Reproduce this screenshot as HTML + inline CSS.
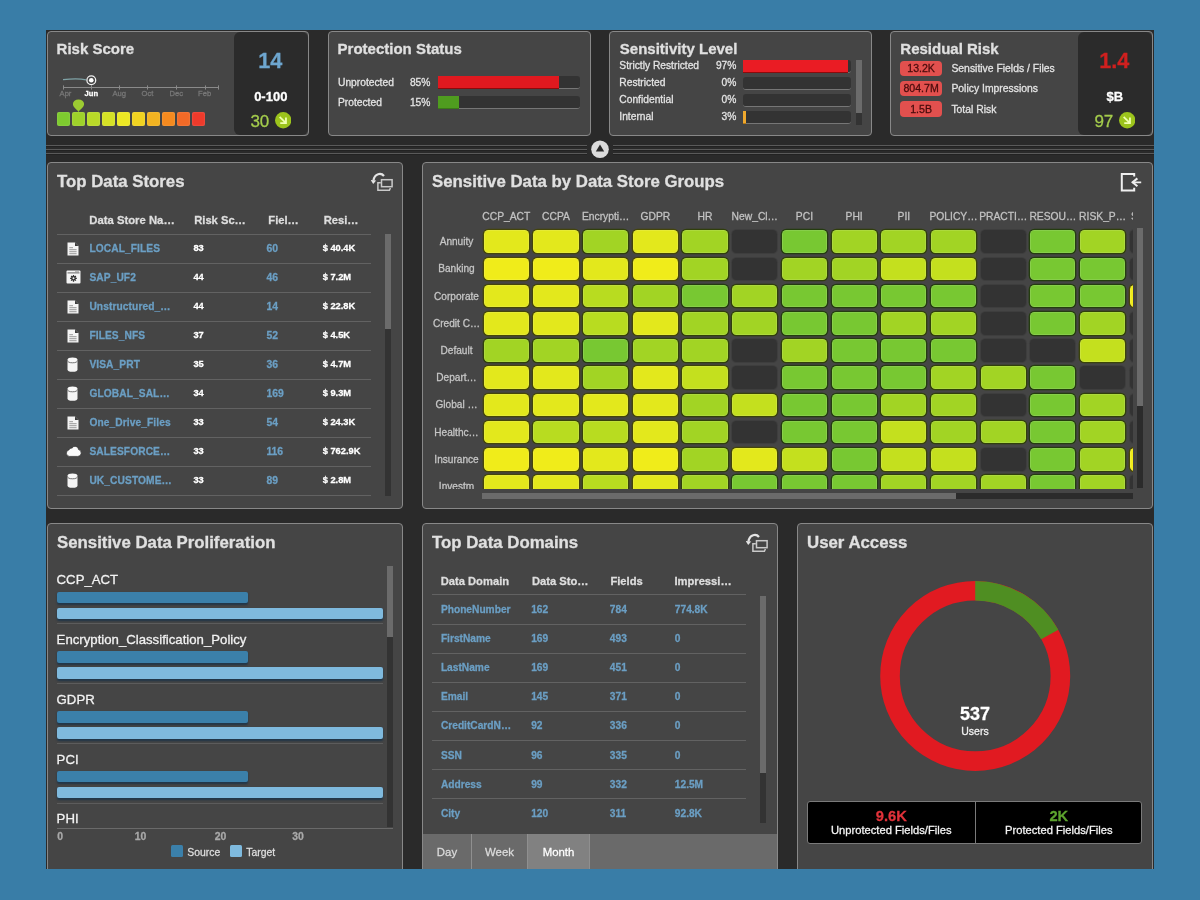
<!DOCTYPE html><html><head><meta charset="utf-8"><title>Dashboard</title><style>
*{box-sizing:border-box;margin:0;padding:0}
html,body{width:1200px;height:900px;overflow:hidden}
body{background:#397da7;font-family:"Liberation Sans",sans-serif;position:relative;color:#e2e2e2}
.abs{position:absolute}
#panel{will-change:transform;position:absolute;left:46px;top:30px;width:1108px;height:839px;background:#2a2a2a;overflow:hidden}
.card{position:absolute;background:#454545;border:1px solid #888;border-radius:4px;overflow:hidden}
.title{position:absolute;font-weight:bold;font-size:15px;color:#e0e0e0;white-space:nowrap;line-height:18px}
.t{position:absolute;white-space:nowrap;line-height:1;-webkit-text-stroke:0.28px}
.sm{font-size:10.4px;color:#e4e4e4}
.dark{position:absolute;background:#2b2b2b;border-radius:6px}
.hl{position:absolute;height:1px;background:#5a5a5a;box-shadow:0 1px 0 #222}
</style></head><body><div id="panel"><div class="hl" style="left:0;top:115px;width:541px"></div><div class="hl" style="left:567px;top:115px;width:541px"></div><div class="hl" style="left:0;top:119px;width:541px"></div><div class="hl" style="left:567px;top:119px;width:541px"></div><div class="hl" style="left:0;top:123px;width:541px"></div><div class="hl" style="left:567px;top:123px;width:541px"></div><svg class="abs" style="left:544px;top:109px" width="20" height="20" viewBox="0 0 20 20"><circle cx="10" cy="10.2" r="8.8" fill="#dcdcdc"/><path d="M10 5.4 L14.2 12.6 L5.8 12.6 Z" fill="#2a2a2a"/></svg><div class="card " style="left:1px;top:1px;width:262px;height:105px"><div class="t" style="left:8.60px;top:8px;font-size:15px;line-height:18px;font-weight:bold;color:#e0e0e0">Risk Score</div><svg class="abs" style="left:7px;top:38px" width="175" height="30" viewBox="55 70 175 30"><path d="M63.5 87.5 H218.5" stroke="#8a8a8a" stroke-width="1" fill="none"/><path d="M63.5 85.4 V89.6" stroke="#8a8a8a" stroke-width="1"/><path d="M91.5 85.4 V89.6" stroke="#8a8a8a" stroke-width="1"/><path d="M119.5 85.4 V89.6" stroke="#8a8a8a" stroke-width="1"/><path d="M147.5 85.4 V89.6" stroke="#8a8a8a" stroke-width="1"/><path d="M176.5 85.4 V89.6" stroke="#8a8a8a" stroke-width="1"/><path d="M205.5 85.4 V89.6" stroke="#8a8a8a" stroke-width="1"/><path d="M218.5 85.4 V89.6" stroke="#8a8a8a" stroke-width="1"/><path d="M63 79.6 C72 78.6 80 78.4 86 79.8" stroke="#7fa2a6" stroke-width="1.3" fill="none"/><circle cx="91.3" cy="80.3" r="4.4" fill="#454545" stroke="#f2f2f2" stroke-width="1.3"/><circle cx="91.3" cy="80.3" r="2.3" fill="#fff"/></svg><div class="t" style="left:2.50px;top:57px;font-size:7.6px;line-height:10px;width:30px;text-align:center;color:#787878">Apr</div><div class="t" style="left:28.30px;top:57px;font-size:7.6px;line-height:10px;width:30px;text-align:center;color:#fff;font-weight:bold">Jun</div><div class="t" style="left:56.20px;top:57px;font-size:7.6px;line-height:10px;width:30px;text-align:center;color:#787878">Aug</div><div class="t" style="left:84.50px;top:57px;font-size:7.6px;line-height:10px;width:30px;text-align:center;color:#787878">Oct</div><div class="t" style="left:113.20px;top:57px;font-size:7.6px;line-height:10px;width:30px;text-align:center;color:#787878">Dec</div><div class="t" style="left:141.60px;top:57px;font-size:7.6px;line-height:10px;width:30px;text-align:center;color:#787878">Feb</div><div class="abs" style="left:9.30px;top:80.40px;width:12.9px;height:13.2px;border-radius:2px;background:#7ecb2f;box-shadow:inset 0 0 2px rgba(255,255,255,.25)"></div><div class="abs" style="left:24.30px;top:80.40px;width:12.9px;height:13.2px;border-radius:2px;background:#9ed12a;box-shadow:inset 0 0 2px rgba(255,255,255,.25)"></div><div class="abs" style="left:39.30px;top:80.40px;width:12.9px;height:13.2px;border-radius:2px;background:#b9d928;box-shadow:inset 0 0 2px rgba(255,255,255,.25)"></div><div class="abs" style="left:54.30px;top:80.40px;width:12.9px;height:13.2px;border-radius:2px;background:#d5e126;box-shadow:inset 0 0 2px rgba(255,255,255,.25)"></div><div class="abs" style="left:69.30px;top:80.40px;width:12.9px;height:13.2px;border-radius:2px;background:#ece824;box-shadow:inset 0 0 2px rgba(255,255,255,.25)"></div><div class="abs" style="left:84.30px;top:80.40px;width:12.9px;height:13.2px;border-radius:2px;background:#f0d321;box-shadow:inset 0 0 2px rgba(255,255,255,.25)"></div><div class="abs" style="left:99.30px;top:80.40px;width:12.9px;height:13.2px;border-radius:2px;background:#f2b321;box-shadow:inset 0 0 2px rgba(255,255,255,.25)"></div><div class="abs" style="left:114.30px;top:80.40px;width:12.9px;height:13.2px;border-radius:2px;background:#f58a1f;box-shadow:inset 0 0 2px rgba(255,255,255,.25)"></div><div class="abs" style="left:129.30px;top:80.40px;width:12.9px;height:13.2px;border-radius:2px;background:#f26a27;box-shadow:inset 0 0 2px rgba(255,255,255,.25)"></div><div class="abs" style="left:144.30px;top:80.40px;width:12.9px;height:13.2px;border-radius:2px;background:#ee3a2b;box-shadow:inset 0 0 2px rgba(255,255,255,.25)"></div><svg class="abs" style="left:24px;top:67px" width="13" height="14" viewBox="0 0 13 14"><path d="M6.5 13.2 C5.6 10.6 0.9 8.6 0.9 5 A5.6 4.6 0 0 1 12.1 5 C12.1 8.6 7.4 10.6 6.5 13.2 Z" fill="#9ccb32"/></svg><div class="dark" style="left:186px;top:0px;width:74px;height:103px"></div><div class="t" style="left:185.60px;top:17px;font-size:21.6px;line-height:24px;width:73.5px;text-align:center;font-weight:bold;color:#6ea6cf">14</div><div class="t" style="left:186.00px;top:57px;font-size:13px;line-height:16px;width:73.5px;text-align:center;font-weight:bold;color:#fff">0-100</div><div class="t" style="left:202.40px;top:80px;font-size:17px;line-height:20px;color:#a4cc4c">30</div><svg class="abs" style="left:226.8px;top:80.4px" width="16.4" height="16.4" viewBox="0 0 16 16"><circle cx="8" cy="8" r="8" fill="#9cc41c"/><path d="M5.2 5.4 L10 10.2 M6 10.9 L10.7 10.9 L10.7 6.2" stroke="#f0ffb0" stroke-width="1.8" fill="none" stroke-linecap="square"/></svg></div><div class="card " style="left:282px;top:1px;width:263px;height:105px"><div class="t" style="left:8.60px;top:8px;font-size:15px;line-height:18px;font-weight:bold;color:#e0e0e0">Protection Status</div><div class="t" style="left:9.00px;top:44px;font-size:10.25px;line-height:13px;color:#e4e4e4">Unprotected</div><div class="t" style="left:71.00px;top:44px;font-size:10.25px;line-height:13px;width:30.4px;text-align:right;color:#e4e4e4">85%</div><div class="abs" style="left:109px;top:44.3px;width:142px;height:13.0px;background:#333;border-bottom:1px solid #767676;border-radius:0 3px 3px 0"></div><div class="abs" style="left:109px;top:44.3px;width:120.7px;height:13.0px;background:#e0191f;border-bottom:1.5px solid #8c0a0c"></div><div class="t" style="left:9.00px;top:64px;font-size:10.25px;line-height:13px;color:#e4e4e4">Protected</div><div class="t" style="left:71.00px;top:64px;font-size:10.25px;line-height:13px;width:30.4px;text-align:right;color:#e4e4e4">15%</div><div class="abs" style="left:109px;top:64.1px;width:142px;height:13.0px;background:#333;border-bottom:1px solid #767676;border-radius:0 3px 3px 0"></div><div class="abs" style="left:109px;top:64.1px;width:21.3px;height:13.0px;background:#4f9c1f;border-bottom:1.5px solid #3b7a18"></div></div><div class="card " style="left:563px;top:1px;width:263px;height:105px"><div class="t" style="left:9.80px;top:8px;font-size:15px;line-height:18px;font-weight:bold;color:#e0e0e0">Sensitivity Level</div><div class="t" style="left:9.30px;top:27px;font-size:10.25px;line-height:13px;color:#e4e4e4">Strictly Restricted</div><div class="t" style="left:96.00px;top:27px;font-size:10.25px;line-height:13px;width:30.4px;text-align:right;color:#e4e4e4">97%</div><div class="abs" style="left:133px;top:28.0px;width:108px;height:13.0px;background:#333;border-bottom:1px solid #767676;border-radius:0 3px 3px 0"></div><div class="abs" style="left:133px;top:28.0px;width:104.8px;height:13.0px;background:#ea1c24;border-bottom:1.5px solid #8c0a0c"></div><div class="t" style="left:9.30px;top:44px;font-size:10.25px;line-height:13px;color:#e4e4e4">Restricted</div><div class="t" style="left:96.00px;top:44px;font-size:10.25px;line-height:13px;width:30.4px;text-align:right;color:#e4e4e4">0%</div><div class="abs" style="left:133px;top:44.900000000000006px;width:108px;height:13.0px;background:#333;border-bottom:1px solid #767676;border-radius:3px"></div><div class="t" style="left:9.30px;top:61px;font-size:10.25px;line-height:13px;color:#e4e4e4">Confidential</div><div class="t" style="left:96.00px;top:61px;font-size:10.25px;line-height:13px;width:30.4px;text-align:right;color:#e4e4e4">0%</div><div class="abs" style="left:133px;top:61.8px;width:108px;height:13.0px;background:#333;border-bottom:1px solid #767676;border-radius:3px"></div><div class="t" style="left:9.30px;top:78px;font-size:10.25px;line-height:13px;color:#e4e4e4">Internal</div><div class="t" style="left:96.00px;top:78px;font-size:10.25px;line-height:13px;width:30.4px;text-align:right;color:#e4e4e4">3%</div><div class="abs" style="left:133px;top:78.69999999999999px;width:108px;height:13.0px;background:#333;border-bottom:1px solid #767676;border-radius:0 3px 3px 0"></div><div class="abs" style="left:133px;top:78.69999999999999px;width:3.2px;height:13.0px;background:#f0a92e;border-bottom:1.5px solid #b87a10"></div><div class="abs" style="left:246px;top:28px;width:6px;height:65px;background:#333"></div><div class="abs" style="left:246px;top:28px;width:6px;height:52.5px;background:#6b6b6b"></div></div><div class="card " style="left:844px;top:1px;width:263px;height:105px"><div class="t" style="left:9.30px;top:8px;font-size:15px;line-height:18px;font-weight:bold;color:#e0e0e0">Residual Risk</div><div class="abs" style="left:9.100000000000023px;top:28.5px;width:42px;height:15.5px;border-radius:4px;background:#e2504e"></div><div class="t" style="left:9.10px;top:29px;font-size:10.6px;line-height:14px;width:42px;text-align:center;color:#4a0c0c">13.2K</div><div class="t" style="left:60.40px;top:30px;font-size:10.4px;line-height:14px;color:#e4e4e4">Sensitive Fields / Files</div><div class="abs" style="left:9.100000000000023px;top:48.900000000000006px;width:42px;height:15.5px;border-radius:4px;background:#e2504e"></div><div class="t" style="left:9.10px;top:49px;font-size:10.6px;line-height:14px;width:42px;text-align:center;color:#4a0c0c">804.7M</div><div class="t" style="left:60.40px;top:50px;font-size:10.4px;line-height:14px;color:#e4e4e4">Policy Impressions</div><div class="abs" style="left:9.100000000000023px;top:69.3px;width:42px;height:15.5px;border-radius:4px;background:#e2504e"></div><div class="t" style="left:9.10px;top:70px;font-size:10.6px;line-height:14px;width:42px;text-align:center;color:#4a0c0c">1.5B</div><div class="t" style="left:60.40px;top:71px;font-size:10.4px;line-height:14px;color:#e4e4e4">Total Risk</div><div class="dark" style="left:187px;top:0px;width:74px;height:103px"></div><div class="t" style="left:186.40px;top:17px;font-size:21.6px;line-height:24px;width:73.5px;text-align:center;font-weight:bold;color:#d0201f">1.4</div><div class="t" style="left:187.00px;top:57px;font-size:13px;line-height:16px;width:73.5px;text-align:center;font-weight:bold;color:#fff">$B</div><div class="t" style="left:203.40px;top:80px;font-size:17px;line-height:20px;color:#a4cc4c">97</div><svg class="abs" style="left:227.79999999999995px;top:80.4px" width="16.4" height="16.4" viewBox="0 0 16 16"><circle cx="8" cy="8" r="8" fill="#9cc41c"/><path d="M5.2 5.4 L10 10.2 M6 10.9 L10.7 10.9 L10.7 6.2" stroke="#f0ffb0" stroke-width="1.8" fill="none" stroke-linecap="square"/></svg></div><div class="card " style="left:1px;top:132px;width:356px;height:347px"><div class="t" style="left:9.30px;top:9px;font-size:15.9px;line-height:20px;font-weight:bold;color:#e0e0e0;transform:scaleX(1.057);transform-origin:0 0">Top Data Stores</div><svg class="abs" style="left:323px;top:8px" width="24" height="22" viewBox="0 0 24 22"><path d="M13 5 C10.2 1.6 3.6 2.2 2.4 9.6" stroke="#e4e4e4" stroke-width="2.2" fill="none"/><path d="M-0.4 9 L5.2 9.4 L2.2 13 Z" fill="#e4e4e4"/><path d="M9.8 11.7 H6.9 V19.3 H18.4 L19.4 17" stroke="#c9c9c9" stroke-width="1.5" fill="none"/><rect x="10.5" y="8.7" width="10.6" height="7" stroke="#c9c9c9" stroke-width="1.5" fill="none"/></svg><div class="t" style="left:41.30px;top:50px;font-size:11.3px;line-height:15px;font-weight:bold;color:#dedede">Data Store Na…</div><div class="t" style="left:146.20px;top:50px;font-size:11.2px;line-height:15px;font-weight:bold;color:#dedede">Risk Sc…</div><div class="t" style="left:220.30px;top:50px;font-size:11.2px;line-height:15px;font-weight:bold;color:#dedede">Fiel…</div><div class="t" style="left:275.70px;top:50px;font-size:11.2px;line-height:15px;font-weight:bold;color:#dedede">Resi…</div><div class="abs" style="left:8.5px;top:70.6px;width:314.5px;height:1.0px;background:#626262"></div><div class="abs" style="left:8.5px;top:99.5px;width:314.5px;height:1.0px;background:#626262"></div><svg class="abs" style="left:19.200000000000003px;top:78.6px" width="12" height="14" viewBox="0 0 12 14"><path d="M0.5 0.5 H8 L11.5 4 V13.5 H0.5 Z" fill="#f4f4f4"/><path d="M8 0.5 V4 H11.5 Z" fill="#3a3a3a"/><path d="M2.3 5.6 H6 M2.3 7.6 H9.6 M2.3 9.6 H9.6 M2.3 11.6 H9.6" stroke="#aaa" stroke-width="1.15"/></svg><div class="t" style="left:41.40px;top:79px;font-size:10.2px;line-height:13px;font-weight:bold;color:#6b9fc4;letter-spacing:0.1px">LOCAL_FILES</div><div class="t" style="left:145.40px;top:79px;font-size:9.3px;line-height:12px;color:#fff;font-weight:bold">83</div><div class="t" style="left:218.40px;top:79px;font-size:10.4px;line-height:14px;font-weight:bold;color:#6b9fc4">60</div><div class="t" style="left:274.70px;top:79px;font-size:9.3px;line-height:12px;color:#fff;font-weight:bold">$ 40.4K</div><div class="abs" style="left:8.5px;top:128.5px;width:314.5px;height:1.0px;background:#626262"></div><svg class="abs" style="left:18.200000000000003px;top:107.19999999999999px" width="15" height="14" viewBox="0 0 15 14"><rect x="0.5" y="0.5" width="14" height="13" rx="1" fill="#f4f4f4"/><path d="M1.5 2.9 H13.5" stroke="#555" stroke-width="0.9"/><path d="M10 1.2 V2.2 M12 1.2 V2.2" stroke="#555" stroke-width="0.9"/><g transform="translate(7.5 8.3) scale(0.86)"><circle r="2.6" fill="#333"/><path d="M0 -3.9 V3.9 M-3.9 0 H3.9 M-2.75 -2.75 L2.75 2.75 M-2.75 2.75 L2.75 -2.75" stroke="#333" stroke-width="1.5"/><circle r="1.15" fill="#f4f4f4"/></g></svg><div class="t" style="left:41.40px;top:108px;font-size:10.2px;line-height:13px;font-weight:bold;color:#6b9fc4;letter-spacing:0.1px">SAP_UF2</div><div class="t" style="left:145.40px;top:108px;font-size:9.3px;line-height:12px;color:#fff;font-weight:bold">44</div><div class="t" style="left:218.40px;top:108px;font-size:10.4px;line-height:14px;font-weight:bold;color:#6b9fc4">46</div><div class="t" style="left:274.70px;top:108px;font-size:9.3px;line-height:12px;color:#fff;font-weight:bold">$ 7.2M</div><div class="abs" style="left:8.5px;top:157.5px;width:314.5px;height:1.0px;background:#626262"></div><svg class="abs" style="left:19.200000000000003px;top:136.60000000000002px" width="12" height="14" viewBox="0 0 12 14"><path d="M0.5 0.5 H8 L11.5 4 V13.5 H0.5 Z" fill="#f4f4f4"/><path d="M8 0.5 V4 H11.5 Z" fill="#3a3a3a"/><path d="M2.3 5.6 H6 M2.3 7.6 H9.6 M2.3 9.6 H9.6 M2.3 11.6 H9.6" stroke="#aaa" stroke-width="1.15"/></svg><div class="t" style="left:41.40px;top:137px;font-size:10.2px;line-height:13px;font-weight:bold;color:#6b9fc4;letter-spacing:0.1px">Unstructured_…</div><div class="t" style="left:145.40px;top:137px;font-size:9.3px;line-height:12px;color:#fff;font-weight:bold">44</div><div class="t" style="left:218.40px;top:137px;font-size:10.4px;line-height:14px;font-weight:bold;color:#6b9fc4">14</div><div class="t" style="left:274.70px;top:137px;font-size:9.3px;line-height:12px;color:#fff;font-weight:bold">$ 22.8K</div><div class="abs" style="left:8.5px;top:186.5px;width:314.5px;height:1.0px;background:#626262"></div><svg class="abs" style="left:19.200000000000003px;top:165.7px" width="12" height="14" viewBox="0 0 12 14"><path d="M0.5 0.5 H8 L11.5 4 V13.5 H0.5 Z" fill="#f4f4f4"/><path d="M8 0.5 V4 H11.5 Z" fill="#3a3a3a"/><path d="M2.3 5.6 H6 M2.3 7.6 H9.6 M2.3 9.6 H9.6 M2.3 11.6 H9.6" stroke="#aaa" stroke-width="1.15"/></svg><div class="t" style="left:41.40px;top:166px;font-size:10.2px;line-height:13px;font-weight:bold;color:#6b9fc4;letter-spacing:0.1px">FILES_NFS</div><div class="t" style="left:145.40px;top:166px;font-size:9.3px;line-height:12px;color:#fff;font-weight:bold">37</div><div class="t" style="left:218.40px;top:166px;font-size:10.4px;line-height:14px;font-weight:bold;color:#6b9fc4">52</div><div class="t" style="left:274.70px;top:166px;font-size:9.3px;line-height:12px;color:#fff;font-weight:bold">$ 4.5K</div><div class="abs" style="left:8.5px;top:215.5px;width:314.5px;height:1.0px;background:#626262"></div><svg class="abs" style="left:19px;top:194.3px" width="11" height="15.4" viewBox="0 0 11 15.4"><path d="M0.5 2.8 V12.2 A5 2.6 0 0 0 10.5 12.2 V2.8 Z" fill="#f4f4f4"/><ellipse cx="5.5" cy="2.9" rx="5" ry="2.5" fill="#f8f8f8"/><path d="M0.5 3.2 A5 2.6 0 0 0 10.5 3.2" stroke="#666" stroke-width="0.9" fill="none"/></svg><div class="t" style="left:41.40px;top:195px;font-size:10.2px;line-height:13px;font-weight:bold;color:#6b9fc4;letter-spacing:0.1px">VISA_PRT</div><div class="t" style="left:145.40px;top:195px;font-size:9.3px;line-height:12px;color:#fff;font-weight:bold">35</div><div class="t" style="left:218.40px;top:195px;font-size:10.4px;line-height:14px;font-weight:bold;color:#6b9fc4">36</div><div class="t" style="left:274.70px;top:195px;font-size:9.3px;line-height:12px;color:#fff;font-weight:bold">$ 4.7M</div><div class="abs" style="left:8.5px;top:244.5px;width:314.5px;height:1.0px;background:#626262"></div><svg class="abs" style="left:19px;top:223.3px" width="11" height="15.4" viewBox="0 0 11 15.4"><path d="M0.5 2.8 V12.2 A5 2.6 0 0 0 10.5 12.2 V2.8 Z" fill="#f4f4f4"/><ellipse cx="5.5" cy="2.9" rx="5" ry="2.5" fill="#f8f8f8"/><path d="M0.5 3.2 A5 2.6 0 0 0 10.5 3.2" stroke="#666" stroke-width="0.9" fill="none"/></svg><div class="t" style="left:41.40px;top:224px;font-size:10.2px;line-height:13px;font-weight:bold;color:#6b9fc4;letter-spacing:0.1px">GLOBAL_SAL…</div><div class="t" style="left:145.40px;top:224px;font-size:9.3px;line-height:12px;color:#fff;font-weight:bold">34</div><div class="t" style="left:218.40px;top:224px;font-size:10.4px;line-height:14px;font-weight:bold;color:#6b9fc4">169</div><div class="t" style="left:274.70px;top:224px;font-size:9.3px;line-height:12px;color:#fff;font-weight:bold">$ 9.3M</div><div class="abs" style="left:8.5px;top:273.5px;width:314.5px;height:1.0px;background:#626262"></div><svg class="abs" style="left:19.200000000000003px;top:252.7px" width="12" height="14" viewBox="0 0 12 14"><path d="M0.5 0.5 H8 L11.5 4 V13.5 H0.5 Z" fill="#f4f4f4"/><path d="M8 0.5 V4 H11.5 Z" fill="#3a3a3a"/><path d="M2.3 5.6 H6 M2.3 7.6 H9.6 M2.3 9.6 H9.6 M2.3 11.6 H9.6" stroke="#aaa" stroke-width="1.15"/></svg><div class="t" style="left:41.40px;top:253px;font-size:10.2px;line-height:13px;font-weight:bold;color:#6b9fc4;letter-spacing:0.1px">One_Drive_Files</div><div class="t" style="left:145.40px;top:253px;font-size:9.3px;line-height:12px;color:#fff;font-weight:bold">33</div><div class="t" style="left:218.40px;top:253px;font-size:10.4px;line-height:14px;font-weight:bold;color:#6b9fc4">54</div><div class="t" style="left:274.70px;top:253px;font-size:9.3px;line-height:12px;color:#fff;font-weight:bold">$ 24.3K</div><div class="abs" style="left:8.5px;top:303.0px;width:314.5px;height:1.0px;background:#626262"></div><svg class="abs" style="left:18px;top:281.9px" width="16" height="13" viewBox="0 0 16 13"><path d="M3.5 11.4 A3.3 3.3 0 0 1 2.9 4.9 A3.3 3.3 0 0 1 6.1 3 A3.5 3.5 0 0 1 12.6 4.6 A3.45 3.45 0 0 1 11.8 11.4 Z" fill="#fafafa" stroke="#2c2c2c" stroke-width="0.7"/></svg><div class="t" style="left:41.40px;top:282px;font-size:10.2px;line-height:13px;font-weight:bold;color:#6b9fc4;letter-spacing:0.1px">SALESFORCE…</div><div class="t" style="left:145.40px;top:282px;font-size:9.3px;line-height:12px;color:#fff;font-weight:bold">33</div><div class="t" style="left:218.40px;top:282px;font-size:10.4px;line-height:14px;font-weight:bold;color:#6b9fc4">116</div><div class="t" style="left:274.70px;top:282px;font-size:9.3px;line-height:12px;color:#fff;font-weight:bold">$ 762.9K</div><div class="abs" style="left:8.5px;top:332.0px;width:314.5px;height:1.0px;background:#626262"></div><svg class="abs" style="left:19px;top:310.4px" width="11" height="15.4" viewBox="0 0 11 15.4"><path d="M0.5 2.8 V12.2 A5 2.6 0 0 0 10.5 12.2 V2.8 Z" fill="#f4f4f4"/><ellipse cx="5.5" cy="2.9" rx="5" ry="2.5" fill="#f8f8f8"/><path d="M0.5 3.2 A5 2.6 0 0 0 10.5 3.2" stroke="#666" stroke-width="0.9" fill="none"/></svg><div class="t" style="left:41.40px;top:311px;font-size:10.2px;line-height:13px;font-weight:bold;color:#6b9fc4;letter-spacing:0.1px">UK_CUSTOME…</div><div class="t" style="left:145.40px;top:311px;font-size:9.3px;line-height:12px;color:#fff;font-weight:bold">33</div><div class="t" style="left:218.40px;top:311px;font-size:10.4px;line-height:14px;font-weight:bold;color:#6b9fc4">89</div><div class="t" style="left:274.70px;top:311px;font-size:9.3px;line-height:12px;color:#fff;font-weight:bold">$ 2.8M</div><div class="abs" style="left:337px;top:71px;width:6px;height:262px;background:#333"></div><div class="abs" style="left:337px;top:71px;width:6px;height:95px;background:#6b6b6b"></div></div><div class="card " style="left:376px;top:132px;width:731px;height:347px"><div class="t" style="left:8.60px;top:9px;font-size:15.9px;line-height:20px;font-weight:bold;color:#e0e0e0;transform:scaleX(1.057);transform-origin:0 0">Sensitive Data by Data Store Groups</div><svg class="abs" style="left:696px;top:8px" width="24" height="22" viewBox="0 0 24 22"><path d="M15.2 5.6 V3 H2.8 V19.4 H15.2 V16.8" stroke="#efefef" stroke-width="2" fill="none"/><path d="M13.2 11.3 H22.2" stroke="#efefef" stroke-width="1.8"/><path d="M18.4 7.4 L13.6 11.3 L18.4 15.2" stroke="#efefef" stroke-width="2" fill="none"/></svg><div class="abs" style="left:5px;top:37px;width:704.5999999999999px;height:288.6px;overflow:hidden"><div class="t" style="left:48.30px;top:10.00px;width:60px;text-align:center;font-size:10.3px;line-height:13px;color:#c2c2c2">CCP_ACT</div><div class="t" style="left:97.99px;top:10.00px;width:60px;text-align:center;font-size:10.3px;line-height:13px;color:#c2c2c2">CCPA</div><div class="t" style="left:147.68px;top:10.00px;width:60px;text-align:center;font-size:10.3px;line-height:13px;color:#c2c2c2">Encrypti…</div><div class="t" style="left:197.37px;top:10.00px;width:60px;text-align:center;font-size:10.3px;line-height:13px;color:#c2c2c2">GDPR</div><div class="t" style="left:247.06px;top:10.00px;width:60px;text-align:center;font-size:10.3px;line-height:13px;color:#c2c2c2">HR</div><div class="t" style="left:296.75px;top:10.00px;width:60px;text-align:center;font-size:10.3px;line-height:13px;color:#c2c2c2">New_Cl…</div><div class="t" style="left:346.44px;top:10.00px;width:60px;text-align:center;font-size:10.3px;line-height:13px;color:#c2c2c2">PCI</div><div class="t" style="left:396.13px;top:10.00px;width:60px;text-align:center;font-size:10.3px;line-height:13px;color:#c2c2c2">PHI</div><div class="t" style="left:445.82px;top:10.00px;width:60px;text-align:center;font-size:10.3px;line-height:13px;color:#c2c2c2">PII</div><div class="t" style="left:495.51px;top:10.00px;width:60px;text-align:center;font-size:10.3px;line-height:13px;color:#c2c2c2">POLICY…</div><div class="t" style="left:545.20px;top:10.00px;width:60px;text-align:center;font-size:10.3px;line-height:13px;color:#c2c2c2">PRACTI…</div><div class="t" style="left:594.89px;top:10.00px;width:60px;text-align:center;font-size:10.3px;line-height:13px;color:#c2c2c2">RESOU…</div><div class="t" style="left:644.58px;top:10.00px;width:60px;text-align:center;font-size:10.3px;line-height:13px;color:#c2c2c2">RISK_P…</div><div class="t" style="left:703.00px;top:10.00px;font-size:10.3px;line-height:13px;color:#c2c2c2">SENSITI…</div><div class="t" style="left:-1.5px;top:35.00px;width:60px;text-align:center;font-size:10.1px;line-height:13px;color:#c6c6c6">Annuity</div><div class="abs" style="left:55.70px;top:30.30px;width:45.2px;height:22.8px;border-radius:4.5px;background:#e3e81c;box-shadow:0 0 0 1.35px #444508,inset 0 0 0 .8px rgba(255,255,255,.16)"></div><div class="abs" style="left:105.39px;top:30.30px;width:45.2px;height:22.8px;border-radius:4.5px;background:#e3e81c;box-shadow:0 0 0 1.35px #444508,inset 0 0 0 .8px rgba(255,255,255,.16)"></div><div class="abs" style="left:155.08px;top:30.30px;width:45.2px;height:22.8px;border-radius:4.5px;background:#a2d424;box-shadow:0 0 0 1.35px #303f0a,inset 0 0 0 .8px rgba(255,255,255,.16)"></div><div class="abs" style="left:204.77px;top:30.30px;width:45.2px;height:22.8px;border-radius:4.5px;background:#e3e81c;box-shadow:0 0 0 1.35px #444508,inset 0 0 0 .8px rgba(255,255,255,.16)"></div><div class="abs" style="left:254.46px;top:30.30px;width:45.2px;height:22.8px;border-radius:4.5px;background:#a2d424;box-shadow:0 0 0 1.35px #303f0a,inset 0 0 0 .8px rgba(255,255,255,.16)"></div><div class="abs" style="left:304.15px;top:30.30px;width:45.2px;height:22.8px;border-radius:4.5px;background:#333333;box-shadow:0 0 0 1px rgba(58,58,58,.6)"></div><div class="abs" style="left:353.84px;top:30.30px;width:45.2px;height:22.8px;border-radius:4.5px;background:#78c832;box-shadow:0 0 0 1.35px #243c0f,inset 0 0 0 .8px rgba(255,255,255,.16)"></div><div class="abs" style="left:403.53px;top:30.30px;width:45.2px;height:22.8px;border-radius:4.5px;background:#a2d424;box-shadow:0 0 0 1.35px #303f0a,inset 0 0 0 .8px rgba(255,255,255,.16)"></div><div class="abs" style="left:453.22px;top:30.30px;width:45.2px;height:22.8px;border-radius:4.5px;background:#a2d424;box-shadow:0 0 0 1.35px #303f0a,inset 0 0 0 .8px rgba(255,255,255,.16)"></div><div class="abs" style="left:502.91px;top:30.30px;width:45.2px;height:22.8px;border-radius:4.5px;background:#a2d424;box-shadow:0 0 0 1.35px #303f0a,inset 0 0 0 .8px rgba(255,255,255,.16)"></div><div class="abs" style="left:552.60px;top:30.30px;width:45.2px;height:22.8px;border-radius:4.5px;background:#333333;box-shadow:0 0 0 1px rgba(58,58,58,.6)"></div><div class="abs" style="left:602.29px;top:30.30px;width:45.2px;height:22.8px;border-radius:4.5px;background:#78c832;box-shadow:0 0 0 1.35px #243c0f,inset 0 0 0 .8px rgba(255,255,255,.16)"></div><div class="abs" style="left:651.98px;top:30.30px;width:45.2px;height:22.8px;border-radius:4.5px;background:#a2d424;box-shadow:0 0 0 1.35px #303f0a,inset 0 0 0 .8px rgba(255,255,255,.16)"></div><div class="abs" style="left:701.67px;top:30.30px;width:45.2px;height:22.8px;border-radius:4.5px;background:#333333;box-shadow:0 0 0 1px rgba(58,58,58,.6)"></div><div class="t" style="left:-1.5px;top:62.00px;width:60px;text-align:center;font-size:10.1px;line-height:13px;color:#c6c6c6">Banking</div><div class="abs" style="left:55.70px;top:57.50px;width:45.2px;height:22.8px;border-radius:4.5px;background:#f0ec1a;box-shadow:0 0 0 1.35px #484607,inset 0 0 0 .8px rgba(255,255,255,.16)"></div><div class="abs" style="left:105.39px;top:57.50px;width:45.2px;height:22.8px;border-radius:4.5px;background:#f0ec1a;box-shadow:0 0 0 1.35px #484607,inset 0 0 0 .8px rgba(255,255,255,.16)"></div><div class="abs" style="left:155.08px;top:57.50px;width:45.2px;height:22.8px;border-radius:4.5px;background:#e3e81c;box-shadow:0 0 0 1.35px #444508,inset 0 0 0 .8px rgba(255,255,255,.16)"></div><div class="abs" style="left:204.77px;top:57.50px;width:45.2px;height:22.8px;border-radius:4.5px;background:#f0ec1a;box-shadow:0 0 0 1.35px #484607,inset 0 0 0 .8px rgba(255,255,255,.16)"></div><div class="abs" style="left:254.46px;top:57.50px;width:45.2px;height:22.8px;border-radius:4.5px;background:#a2d424;box-shadow:0 0 0 1.35px #303f0a,inset 0 0 0 .8px rgba(255,255,255,.16)"></div><div class="abs" style="left:304.15px;top:57.50px;width:45.2px;height:22.8px;border-radius:4.5px;background:#333333;box-shadow:0 0 0 1px rgba(58,58,58,.6)"></div><div class="abs" style="left:353.84px;top:57.50px;width:45.2px;height:22.8px;border-radius:4.5px;background:#a2d424;box-shadow:0 0 0 1.35px #303f0a,inset 0 0 0 .8px rgba(255,255,255,.16)"></div><div class="abs" style="left:403.53px;top:57.50px;width:45.2px;height:22.8px;border-radius:4.5px;background:#a2d424;box-shadow:0 0 0 1.35px #303f0a,inset 0 0 0 .8px rgba(255,255,255,.16)"></div><div class="abs" style="left:453.22px;top:57.50px;width:45.2px;height:22.8px;border-radius:4.5px;background:#c4e01e;box-shadow:0 0 0 1.35px #3a4309,inset 0 0 0 .8px rgba(255,255,255,.16)"></div><div class="abs" style="left:502.91px;top:57.50px;width:45.2px;height:22.8px;border-radius:4.5px;background:#c4e01e;box-shadow:0 0 0 1.35px #3a4309,inset 0 0 0 .8px rgba(255,255,255,.16)"></div><div class="abs" style="left:552.60px;top:57.50px;width:45.2px;height:22.8px;border-radius:4.5px;background:#333333;box-shadow:0 0 0 1px rgba(58,58,58,.6)"></div><div class="abs" style="left:602.29px;top:57.50px;width:45.2px;height:22.8px;border-radius:4.5px;background:#78c832;box-shadow:0 0 0 1.35px #243c0f,inset 0 0 0 .8px rgba(255,255,255,.16)"></div><div class="abs" style="left:651.98px;top:57.50px;width:45.2px;height:22.8px;border-radius:4.5px;background:#78c832;box-shadow:0 0 0 1.35px #243c0f,inset 0 0 0 .8px rgba(255,255,255,.16)"></div><div class="abs" style="left:701.67px;top:57.50px;width:45.2px;height:22.8px;border-radius:4.5px;background:#333333;box-shadow:0 0 0 1px rgba(58,58,58,.6)"></div><div class="t" style="left:-1.5px;top:90.00px;width:60px;text-align:center;font-size:10.1px;line-height:13px;color:#c6c6c6">Corporate</div><div class="abs" style="left:55.70px;top:84.70px;width:45.2px;height:22.8px;border-radius:4.5px;background:#e3e81c;box-shadow:0 0 0 1.35px #444508,inset 0 0 0 .8px rgba(255,255,255,.16)"></div><div class="abs" style="left:105.39px;top:84.70px;width:45.2px;height:22.8px;border-radius:4.5px;background:#e3e81c;box-shadow:0 0 0 1.35px #444508,inset 0 0 0 .8px rgba(255,255,255,.16)"></div><div class="abs" style="left:155.08px;top:84.70px;width:45.2px;height:22.8px;border-radius:4.5px;background:#b8dc20;box-shadow:0 0 0 1.35px #374209,inset 0 0 0 .8px rgba(255,255,255,.16)"></div><div class="abs" style="left:204.77px;top:84.70px;width:45.2px;height:22.8px;border-radius:4.5px;background:#a2d424;box-shadow:0 0 0 1.35px #303f0a,inset 0 0 0 .8px rgba(255,255,255,.16)"></div><div class="abs" style="left:254.46px;top:84.70px;width:45.2px;height:22.8px;border-radius:4.5px;background:#78c832;box-shadow:0 0 0 1.35px #243c0f,inset 0 0 0 .8px rgba(255,255,255,.16)"></div><div class="abs" style="left:304.15px;top:84.70px;width:45.2px;height:22.8px;border-radius:4.5px;background:#a2d424;box-shadow:0 0 0 1.35px #303f0a,inset 0 0 0 .8px rgba(255,255,255,.16)"></div><div class="abs" style="left:353.84px;top:84.70px;width:45.2px;height:22.8px;border-radius:4.5px;background:#78c832;box-shadow:0 0 0 1.35px #243c0f,inset 0 0 0 .8px rgba(255,255,255,.16)"></div><div class="abs" style="left:403.53px;top:84.70px;width:45.2px;height:22.8px;border-radius:4.5px;background:#78c832;box-shadow:0 0 0 1.35px #243c0f,inset 0 0 0 .8px rgba(255,255,255,.16)"></div><div class="abs" style="left:453.22px;top:84.70px;width:45.2px;height:22.8px;border-radius:4.5px;background:#78c832;box-shadow:0 0 0 1.35px #243c0f,inset 0 0 0 .8px rgba(255,255,255,.16)"></div><div class="abs" style="left:502.91px;top:84.70px;width:45.2px;height:22.8px;border-radius:4.5px;background:#78c832;box-shadow:0 0 0 1.35px #243c0f,inset 0 0 0 .8px rgba(255,255,255,.16)"></div><div class="abs" style="left:552.60px;top:84.70px;width:45.2px;height:22.8px;border-radius:4.5px;background:#333333;box-shadow:0 0 0 1px rgba(58,58,58,.6)"></div><div class="abs" style="left:602.29px;top:84.70px;width:45.2px;height:22.8px;border-radius:4.5px;background:#78c832;box-shadow:0 0 0 1.35px #243c0f,inset 0 0 0 .8px rgba(255,255,255,.16)"></div><div class="abs" style="left:651.98px;top:84.70px;width:45.2px;height:22.8px;border-radius:4.5px;background:#78c832;box-shadow:0 0 0 1.35px #243c0f,inset 0 0 0 .8px rgba(255,255,255,.16)"></div><div class="abs" style="left:701.67px;top:84.70px;width:45.2px;height:22.8px;border-radius:4.5px;background:#f0ec1a;box-shadow:0 0 0 1.35px #484607,inset 0 0 0 .8px rgba(255,255,255,.16)"></div><div class="t" style="left:-1.5px;top:117.00px;width:60px;text-align:center;font-size:10.1px;line-height:13px;color:#c6c6c6">Credit C…</div><div class="abs" style="left:55.70px;top:111.90px;width:45.2px;height:22.8px;border-radius:4.5px;background:#e3e81c;box-shadow:0 0 0 1.35px #444508,inset 0 0 0 .8px rgba(255,255,255,.16)"></div><div class="abs" style="left:105.39px;top:111.90px;width:45.2px;height:22.8px;border-radius:4.5px;background:#e3e81c;box-shadow:0 0 0 1.35px #444508,inset 0 0 0 .8px rgba(255,255,255,.16)"></div><div class="abs" style="left:155.08px;top:111.90px;width:45.2px;height:22.8px;border-radius:4.5px;background:#b8dc20;box-shadow:0 0 0 1.35px #374209,inset 0 0 0 .8px rgba(255,255,255,.16)"></div><div class="abs" style="left:204.77px;top:111.90px;width:45.2px;height:22.8px;border-radius:4.5px;background:#e3e81c;box-shadow:0 0 0 1.35px #444508,inset 0 0 0 .8px rgba(255,255,255,.16)"></div><div class="abs" style="left:254.46px;top:111.90px;width:45.2px;height:22.8px;border-radius:4.5px;background:#a2d424;box-shadow:0 0 0 1.35px #303f0a,inset 0 0 0 .8px rgba(255,255,255,.16)"></div><div class="abs" style="left:304.15px;top:111.90px;width:45.2px;height:22.8px;border-radius:4.5px;background:#a2d424;box-shadow:0 0 0 1.35px #303f0a,inset 0 0 0 .8px rgba(255,255,255,.16)"></div><div class="abs" style="left:353.84px;top:111.90px;width:45.2px;height:22.8px;border-radius:4.5px;background:#78c832;box-shadow:0 0 0 1.35px #243c0f,inset 0 0 0 .8px rgba(255,255,255,.16)"></div><div class="abs" style="left:403.53px;top:111.90px;width:45.2px;height:22.8px;border-radius:4.5px;background:#78c832;box-shadow:0 0 0 1.35px #243c0f,inset 0 0 0 .8px rgba(255,255,255,.16)"></div><div class="abs" style="left:453.22px;top:111.90px;width:45.2px;height:22.8px;border-radius:4.5px;background:#a2d424;box-shadow:0 0 0 1.35px #303f0a,inset 0 0 0 .8px rgba(255,255,255,.16)"></div><div class="abs" style="left:502.91px;top:111.90px;width:45.2px;height:22.8px;border-radius:4.5px;background:#a2d424;box-shadow:0 0 0 1.35px #303f0a,inset 0 0 0 .8px rgba(255,255,255,.16)"></div><div class="abs" style="left:552.60px;top:111.90px;width:45.2px;height:22.8px;border-radius:4.5px;background:#333333;box-shadow:0 0 0 1px rgba(58,58,58,.6)"></div><div class="abs" style="left:602.29px;top:111.90px;width:45.2px;height:22.8px;border-radius:4.5px;background:#78c832;box-shadow:0 0 0 1.35px #243c0f,inset 0 0 0 .8px rgba(255,255,255,.16)"></div><div class="abs" style="left:651.98px;top:111.90px;width:45.2px;height:22.8px;border-radius:4.5px;background:#a2d424;box-shadow:0 0 0 1.35px #303f0a,inset 0 0 0 .8px rgba(255,255,255,.16)"></div><div class="abs" style="left:701.67px;top:111.90px;width:45.2px;height:22.8px;border-radius:4.5px;background:#333333;box-shadow:0 0 0 1px rgba(58,58,58,.6)"></div><div class="t" style="left:-1.5px;top:144.00px;width:60px;text-align:center;font-size:10.1px;line-height:13px;color:#c6c6c6">Default</div><div class="abs" style="left:55.70px;top:139.10px;width:45.2px;height:22.8px;border-radius:4.5px;background:#a2d424;box-shadow:0 0 0 1.35px #303f0a,inset 0 0 0 .8px rgba(255,255,255,.16)"></div><div class="abs" style="left:105.39px;top:139.10px;width:45.2px;height:22.8px;border-radius:4.5px;background:#a2d424;box-shadow:0 0 0 1.35px #303f0a,inset 0 0 0 .8px rgba(255,255,255,.16)"></div><div class="abs" style="left:155.08px;top:139.10px;width:45.2px;height:22.8px;border-radius:4.5px;background:#78c832;box-shadow:0 0 0 1.35px #243c0f,inset 0 0 0 .8px rgba(255,255,255,.16)"></div><div class="abs" style="left:204.77px;top:139.10px;width:45.2px;height:22.8px;border-radius:4.5px;background:#a2d424;box-shadow:0 0 0 1.35px #303f0a,inset 0 0 0 .8px rgba(255,255,255,.16)"></div><div class="abs" style="left:254.46px;top:139.10px;width:45.2px;height:22.8px;border-radius:4.5px;background:#a2d424;box-shadow:0 0 0 1.35px #303f0a,inset 0 0 0 .8px rgba(255,255,255,.16)"></div><div class="abs" style="left:304.15px;top:139.10px;width:45.2px;height:22.8px;border-radius:4.5px;background:#333333;box-shadow:0 0 0 1px rgba(58,58,58,.6)"></div><div class="abs" style="left:353.84px;top:139.10px;width:45.2px;height:22.8px;border-radius:4.5px;background:#a2d424;box-shadow:0 0 0 1.35px #303f0a,inset 0 0 0 .8px rgba(255,255,255,.16)"></div><div class="abs" style="left:403.53px;top:139.10px;width:45.2px;height:22.8px;border-radius:4.5px;background:#78c832;box-shadow:0 0 0 1.35px #243c0f,inset 0 0 0 .8px rgba(255,255,255,.16)"></div><div class="abs" style="left:453.22px;top:139.10px;width:45.2px;height:22.8px;border-radius:4.5px;background:#78c832;box-shadow:0 0 0 1.35px #243c0f,inset 0 0 0 .8px rgba(255,255,255,.16)"></div><div class="abs" style="left:502.91px;top:139.10px;width:45.2px;height:22.8px;border-radius:4.5px;background:#78c832;box-shadow:0 0 0 1.35px #243c0f,inset 0 0 0 .8px rgba(255,255,255,.16)"></div><div class="abs" style="left:552.60px;top:139.10px;width:45.2px;height:22.8px;border-radius:4.5px;background:#333333;box-shadow:0 0 0 1px rgba(58,58,58,.6)"></div><div class="abs" style="left:602.29px;top:139.10px;width:45.2px;height:22.8px;border-radius:4.5px;background:#333333;box-shadow:0 0 0 1px rgba(58,58,58,.6)"></div><div class="abs" style="left:651.98px;top:139.10px;width:45.2px;height:22.8px;border-radius:4.5px;background:#c4e01e;box-shadow:0 0 0 1.35px #3a4309,inset 0 0 0 .8px rgba(255,255,255,.16)"></div><div class="abs" style="left:701.67px;top:139.10px;width:45.2px;height:22.8px;border-radius:4.5px;background:#333333;box-shadow:0 0 0 1px rgba(58,58,58,.6)"></div><div class="t" style="left:-1.5px;top:171.00px;width:60px;text-align:center;font-size:10.1px;line-height:13px;color:#c6c6c6">Depart…</div><div class="abs" style="left:55.70px;top:166.30px;width:45.2px;height:22.8px;border-radius:4.5px;background:#e3e81c;box-shadow:0 0 0 1.35px #444508,inset 0 0 0 .8px rgba(255,255,255,.16)"></div><div class="abs" style="left:105.39px;top:166.30px;width:45.2px;height:22.8px;border-radius:4.5px;background:#e3e81c;box-shadow:0 0 0 1.35px #444508,inset 0 0 0 .8px rgba(255,255,255,.16)"></div><div class="abs" style="left:155.08px;top:166.30px;width:45.2px;height:22.8px;border-radius:4.5px;background:#a2d424;box-shadow:0 0 0 1.35px #303f0a,inset 0 0 0 .8px rgba(255,255,255,.16)"></div><div class="abs" style="left:204.77px;top:166.30px;width:45.2px;height:22.8px;border-radius:4.5px;background:#e3e81c;box-shadow:0 0 0 1.35px #444508,inset 0 0 0 .8px rgba(255,255,255,.16)"></div><div class="abs" style="left:254.46px;top:166.30px;width:45.2px;height:22.8px;border-radius:4.5px;background:#c4e01e;box-shadow:0 0 0 1.35px #3a4309,inset 0 0 0 .8px rgba(255,255,255,.16)"></div><div class="abs" style="left:304.15px;top:166.30px;width:45.2px;height:22.8px;border-radius:4.5px;background:#333333;box-shadow:0 0 0 1px rgba(58,58,58,.6)"></div><div class="abs" style="left:353.84px;top:166.30px;width:45.2px;height:22.8px;border-radius:4.5px;background:#78c832;box-shadow:0 0 0 1.35px #243c0f,inset 0 0 0 .8px rgba(255,255,255,.16)"></div><div class="abs" style="left:403.53px;top:166.30px;width:45.2px;height:22.8px;border-radius:4.5px;background:#78c832;box-shadow:0 0 0 1.35px #243c0f,inset 0 0 0 .8px rgba(255,255,255,.16)"></div><div class="abs" style="left:453.22px;top:166.30px;width:45.2px;height:22.8px;border-radius:4.5px;background:#78c832;box-shadow:0 0 0 1.35px #243c0f,inset 0 0 0 .8px rgba(255,255,255,.16)"></div><div class="abs" style="left:502.91px;top:166.30px;width:45.2px;height:22.8px;border-radius:4.5px;background:#a2d424;box-shadow:0 0 0 1.35px #303f0a,inset 0 0 0 .8px rgba(255,255,255,.16)"></div><div class="abs" style="left:552.60px;top:166.30px;width:45.2px;height:22.8px;border-radius:4.5px;background:#a2d424;box-shadow:0 0 0 1.35px #303f0a,inset 0 0 0 .8px rgba(255,255,255,.16)"></div><div class="abs" style="left:602.29px;top:166.30px;width:45.2px;height:22.8px;border-radius:4.5px;background:#78c832;box-shadow:0 0 0 1.35px #243c0f,inset 0 0 0 .8px rgba(255,255,255,.16)"></div><div class="abs" style="left:651.98px;top:166.30px;width:45.2px;height:22.8px;border-radius:4.5px;background:#333333;box-shadow:0 0 0 1px rgba(58,58,58,.6)"></div><div class="abs" style="left:701.67px;top:166.30px;width:45.2px;height:22.8px;border-radius:4.5px;background:#333333;box-shadow:0 0 0 1px rgba(58,58,58,.6)"></div><div class="t" style="left:-1.5px;top:198.00px;width:60px;text-align:center;font-size:10.1px;line-height:13px;color:#c6c6c6">Global …</div><div class="abs" style="left:55.70px;top:193.50px;width:45.2px;height:22.8px;border-radius:4.5px;background:#e3e81c;box-shadow:0 0 0 1.35px #444508,inset 0 0 0 .8px rgba(255,255,255,.16)"></div><div class="abs" style="left:105.39px;top:193.50px;width:45.2px;height:22.8px;border-radius:4.5px;background:#e3e81c;box-shadow:0 0 0 1.35px #444508,inset 0 0 0 .8px rgba(255,255,255,.16)"></div><div class="abs" style="left:155.08px;top:193.50px;width:45.2px;height:22.8px;border-radius:4.5px;background:#e3e81c;box-shadow:0 0 0 1.35px #444508,inset 0 0 0 .8px rgba(255,255,255,.16)"></div><div class="abs" style="left:204.77px;top:193.50px;width:45.2px;height:22.8px;border-radius:4.5px;background:#e3e81c;box-shadow:0 0 0 1.35px #444508,inset 0 0 0 .8px rgba(255,255,255,.16)"></div><div class="abs" style="left:254.46px;top:193.50px;width:45.2px;height:22.8px;border-radius:4.5px;background:#a2d424;box-shadow:0 0 0 1.35px #303f0a,inset 0 0 0 .8px rgba(255,255,255,.16)"></div><div class="abs" style="left:304.15px;top:193.50px;width:45.2px;height:22.8px;border-radius:4.5px;background:#c4e01e;box-shadow:0 0 0 1.35px #3a4309,inset 0 0 0 .8px rgba(255,255,255,.16)"></div><div class="abs" style="left:353.84px;top:193.50px;width:45.2px;height:22.8px;border-radius:4.5px;background:#78c832;box-shadow:0 0 0 1.35px #243c0f,inset 0 0 0 .8px rgba(255,255,255,.16)"></div><div class="abs" style="left:403.53px;top:193.50px;width:45.2px;height:22.8px;border-radius:4.5px;background:#78c832;box-shadow:0 0 0 1.35px #243c0f,inset 0 0 0 .8px rgba(255,255,255,.16)"></div><div class="abs" style="left:453.22px;top:193.50px;width:45.2px;height:22.8px;border-radius:4.5px;background:#a2d424;box-shadow:0 0 0 1.35px #303f0a,inset 0 0 0 .8px rgba(255,255,255,.16)"></div><div class="abs" style="left:502.91px;top:193.50px;width:45.2px;height:22.8px;border-radius:4.5px;background:#a2d424;box-shadow:0 0 0 1.35px #303f0a,inset 0 0 0 .8px rgba(255,255,255,.16)"></div><div class="abs" style="left:552.60px;top:193.50px;width:45.2px;height:22.8px;border-radius:4.5px;background:#333333;box-shadow:0 0 0 1px rgba(58,58,58,.6)"></div><div class="abs" style="left:602.29px;top:193.50px;width:45.2px;height:22.8px;border-radius:4.5px;background:#78c832;box-shadow:0 0 0 1.35px #243c0f,inset 0 0 0 .8px rgba(255,255,255,.16)"></div><div class="abs" style="left:651.98px;top:193.50px;width:45.2px;height:22.8px;border-radius:4.5px;background:#a2d424;box-shadow:0 0 0 1.35px #303f0a,inset 0 0 0 .8px rgba(255,255,255,.16)"></div><div class="abs" style="left:701.67px;top:193.50px;width:45.2px;height:22.8px;border-radius:4.5px;background:#333333;box-shadow:0 0 0 1px rgba(58,58,58,.6)"></div><div class="t" style="left:-1.5px;top:226.00px;width:60px;text-align:center;font-size:10.1px;line-height:13px;color:#c6c6c6">Healthc…</div><div class="abs" style="left:55.70px;top:220.70px;width:45.2px;height:22.8px;border-radius:4.5px;background:#e3e81c;box-shadow:0 0 0 1.35px #444508,inset 0 0 0 .8px rgba(255,255,255,.16)"></div><div class="abs" style="left:105.39px;top:220.70px;width:45.2px;height:22.8px;border-radius:4.5px;background:#b8dc20;box-shadow:0 0 0 1.35px #374209,inset 0 0 0 .8px rgba(255,255,255,.16)"></div><div class="abs" style="left:155.08px;top:220.70px;width:45.2px;height:22.8px;border-radius:4.5px;background:#b8dc20;box-shadow:0 0 0 1.35px #374209,inset 0 0 0 .8px rgba(255,255,255,.16)"></div><div class="abs" style="left:204.77px;top:220.70px;width:45.2px;height:22.8px;border-radius:4.5px;background:#e3e81c;box-shadow:0 0 0 1.35px #444508,inset 0 0 0 .8px rgba(255,255,255,.16)"></div><div class="abs" style="left:254.46px;top:220.70px;width:45.2px;height:22.8px;border-radius:4.5px;background:#a2d424;box-shadow:0 0 0 1.35px #303f0a,inset 0 0 0 .8px rgba(255,255,255,.16)"></div><div class="abs" style="left:304.15px;top:220.70px;width:45.2px;height:22.8px;border-radius:4.5px;background:#333333;box-shadow:0 0 0 1px rgba(58,58,58,.6)"></div><div class="abs" style="left:353.84px;top:220.70px;width:45.2px;height:22.8px;border-radius:4.5px;background:#78c832;box-shadow:0 0 0 1.35px #243c0f,inset 0 0 0 .8px rgba(255,255,255,.16)"></div><div class="abs" style="left:403.53px;top:220.70px;width:45.2px;height:22.8px;border-radius:4.5px;background:#78c832;box-shadow:0 0 0 1.35px #243c0f,inset 0 0 0 .8px rgba(255,255,255,.16)"></div><div class="abs" style="left:453.22px;top:220.70px;width:45.2px;height:22.8px;border-radius:4.5px;background:#c4e01e;box-shadow:0 0 0 1.35px #3a4309,inset 0 0 0 .8px rgba(255,255,255,.16)"></div><div class="abs" style="left:502.91px;top:220.70px;width:45.2px;height:22.8px;border-radius:4.5px;background:#a2d424;box-shadow:0 0 0 1.35px #303f0a,inset 0 0 0 .8px rgba(255,255,255,.16)"></div><div class="abs" style="left:552.60px;top:220.70px;width:45.2px;height:22.8px;border-radius:4.5px;background:#a2d424;box-shadow:0 0 0 1.35px #303f0a,inset 0 0 0 .8px rgba(255,255,255,.16)"></div><div class="abs" style="left:602.29px;top:220.70px;width:45.2px;height:22.8px;border-radius:4.5px;background:#78c832;box-shadow:0 0 0 1.35px #243c0f,inset 0 0 0 .8px rgba(255,255,255,.16)"></div><div class="abs" style="left:651.98px;top:220.70px;width:45.2px;height:22.8px;border-radius:4.5px;background:#a2d424;box-shadow:0 0 0 1.35px #303f0a,inset 0 0 0 .8px rgba(255,255,255,.16)"></div><div class="abs" style="left:701.67px;top:220.70px;width:45.2px;height:22.8px;border-radius:4.5px;background:#333333;box-shadow:0 0 0 1px rgba(58,58,58,.6)"></div><div class="t" style="left:-1.5px;top:253.00px;width:60px;text-align:center;font-size:10.1px;line-height:13px;color:#c6c6c6">Insurance</div><div class="abs" style="left:55.70px;top:247.90px;width:45.2px;height:22.8px;border-radius:4.5px;background:#f0ec1a;box-shadow:0 0 0 1.35px #484607,inset 0 0 0 .8px rgba(255,255,255,.16)"></div><div class="abs" style="left:105.39px;top:247.90px;width:45.2px;height:22.8px;border-radius:4.5px;background:#f0ec1a;box-shadow:0 0 0 1.35px #484607,inset 0 0 0 .8px rgba(255,255,255,.16)"></div><div class="abs" style="left:155.08px;top:247.90px;width:45.2px;height:22.8px;border-radius:4.5px;background:#e3e81c;box-shadow:0 0 0 1.35px #444508,inset 0 0 0 .8px rgba(255,255,255,.16)"></div><div class="abs" style="left:204.77px;top:247.90px;width:45.2px;height:22.8px;border-radius:4.5px;background:#f0ec1a;box-shadow:0 0 0 1.35px #484607,inset 0 0 0 .8px rgba(255,255,255,.16)"></div><div class="abs" style="left:254.46px;top:247.90px;width:45.2px;height:22.8px;border-radius:4.5px;background:#a2d424;box-shadow:0 0 0 1.35px #303f0a,inset 0 0 0 .8px rgba(255,255,255,.16)"></div><div class="abs" style="left:304.15px;top:247.90px;width:45.2px;height:22.8px;border-radius:4.5px;background:#e3e81c;box-shadow:0 0 0 1.35px #444508,inset 0 0 0 .8px rgba(255,255,255,.16)"></div><div class="abs" style="left:353.84px;top:247.90px;width:45.2px;height:22.8px;border-radius:4.5px;background:#c4e01e;box-shadow:0 0 0 1.35px #3a4309,inset 0 0 0 .8px rgba(255,255,255,.16)"></div><div class="abs" style="left:403.53px;top:247.90px;width:45.2px;height:22.8px;border-radius:4.5px;background:#78c832;box-shadow:0 0 0 1.35px #243c0f,inset 0 0 0 .8px rgba(255,255,255,.16)"></div><div class="abs" style="left:453.22px;top:247.90px;width:45.2px;height:22.8px;border-radius:4.5px;background:#c4e01e;box-shadow:0 0 0 1.35px #3a4309,inset 0 0 0 .8px rgba(255,255,255,.16)"></div><div class="abs" style="left:502.91px;top:247.90px;width:45.2px;height:22.8px;border-radius:4.5px;background:#c4e01e;box-shadow:0 0 0 1.35px #3a4309,inset 0 0 0 .8px rgba(255,255,255,.16)"></div><div class="abs" style="left:552.60px;top:247.90px;width:45.2px;height:22.8px;border-radius:4.5px;background:#333333;box-shadow:0 0 0 1px rgba(58,58,58,.6)"></div><div class="abs" style="left:602.29px;top:247.90px;width:45.2px;height:22.8px;border-radius:4.5px;background:#78c832;box-shadow:0 0 0 1.35px #243c0f,inset 0 0 0 .8px rgba(255,255,255,.16)"></div><div class="abs" style="left:651.98px;top:247.90px;width:45.2px;height:22.8px;border-radius:4.5px;background:#a2d424;box-shadow:0 0 0 1.35px #303f0a,inset 0 0 0 .8px rgba(255,255,255,.16)"></div><div class="abs" style="left:701.67px;top:247.90px;width:45.2px;height:22.8px;border-radius:4.5px;background:#f0ec1a;box-shadow:0 0 0 1.35px #484607,inset 0 0 0 .8px rgba(255,255,255,.16)"></div><div class="t" style="left:-1.5px;top:280.00px;width:60px;text-align:center;font-size:10.1px;line-height:13px;color:#c6c6c6">Investm</div><div class="abs" style="left:55.70px;top:275.10px;width:45.2px;height:22.8px;border-radius:4.5px;background:#e3e81c;box-shadow:0 0 0 1.35px #444508,inset 0 0 0 .8px rgba(255,255,255,.16)"></div><div class="abs" style="left:105.39px;top:275.10px;width:45.2px;height:22.8px;border-radius:4.5px;background:#e3e81c;box-shadow:0 0 0 1.35px #444508,inset 0 0 0 .8px rgba(255,255,255,.16)"></div><div class="abs" style="left:155.08px;top:275.10px;width:45.2px;height:22.8px;border-radius:4.5px;background:#b8dc20;box-shadow:0 0 0 1.35px #374209,inset 0 0 0 .8px rgba(255,255,255,.16)"></div><div class="abs" style="left:204.77px;top:275.10px;width:45.2px;height:22.8px;border-radius:4.5px;background:#e3e81c;box-shadow:0 0 0 1.35px #444508,inset 0 0 0 .8px rgba(255,255,255,.16)"></div><div class="abs" style="left:254.46px;top:275.10px;width:45.2px;height:22.8px;border-radius:4.5px;background:#a2d424;box-shadow:0 0 0 1.35px #303f0a,inset 0 0 0 .8px rgba(255,255,255,.16)"></div><div class="abs" style="left:304.15px;top:275.10px;width:45.2px;height:22.8px;border-radius:4.5px;background:#78c832;box-shadow:0 0 0 1.35px #243c0f,inset 0 0 0 .8px rgba(255,255,255,.16)"></div><div class="abs" style="left:353.84px;top:275.10px;width:45.2px;height:22.8px;border-radius:4.5px;background:#78c832;box-shadow:0 0 0 1.35px #243c0f,inset 0 0 0 .8px rgba(255,255,255,.16)"></div><div class="abs" style="left:403.53px;top:275.10px;width:45.2px;height:22.8px;border-radius:4.5px;background:#78c832;box-shadow:0 0 0 1.35px #243c0f,inset 0 0 0 .8px rgba(255,255,255,.16)"></div><div class="abs" style="left:453.22px;top:275.10px;width:45.2px;height:22.8px;border-radius:4.5px;background:#a2d424;box-shadow:0 0 0 1.35px #303f0a,inset 0 0 0 .8px rgba(255,255,255,.16)"></div><div class="abs" style="left:502.91px;top:275.10px;width:45.2px;height:22.8px;border-radius:4.5px;background:#a2d424;box-shadow:0 0 0 1.35px #303f0a,inset 0 0 0 .8px rgba(255,255,255,.16)"></div><div class="abs" style="left:552.60px;top:275.10px;width:45.2px;height:22.8px;border-radius:4.5px;background:#a2d424;box-shadow:0 0 0 1.35px #303f0a,inset 0 0 0 .8px rgba(255,255,255,.16)"></div><div class="abs" style="left:602.29px;top:275.10px;width:45.2px;height:22.8px;border-radius:4.5px;background:#78c832;box-shadow:0 0 0 1.35px #243c0f,inset 0 0 0 .8px rgba(255,255,255,.16)"></div><div class="abs" style="left:651.98px;top:275.10px;width:45.2px;height:22.8px;border-radius:4.5px;background:#a2d424;box-shadow:0 0 0 1.35px #303f0a,inset 0 0 0 .8px rgba(255,255,255,.16)"></div><div class="abs" style="left:701.67px;top:275.10px;width:45.2px;height:22.8px;border-radius:4.5px;background:#333333;box-shadow:0 0 0 1px rgba(58,58,58,.6)"></div></div><div class="abs" style="left:59px;top:329.5px;width:650.5px;height:6.5px;background:#2b2b2b"></div><div class="abs" style="left:59px;top:329.5px;width:473.5px;height:6.5px;background:#6b6b6b"></div><div class="abs" style="left:714px;top:65px;width:5.5px;height:260px;background:#2b2b2b"></div><div class="abs" style="left:714px;top:65px;width:5.5px;height:178px;background:#6b6b6b"></div></div><div class="card " style="left:1px;top:493px;width:356px;height:353px"><div class="t" style="left:8.90px;top:9px;font-size:15.9px;line-height:20px;font-weight:bold;color:#e0e0e0;transform:scaleX(1.057);transform-origin:0 0">Sensitive Data Proliferation</div><div class="abs" style="left:2px;top:36px;width:336px;height:268px;overflow:hidden"><div class="t" style="left:6.600000000000001px;top:12.00px;font-size:13.2px;line-height:16px;color:#f2f2f2">CCP_ACT</div><div class="abs" style="left:6.799999999999997px;top:31.50px;width:191.60000000000002px;height:11.4px;border-radius:2px;background:#3b80aa;box-shadow:0 1.5px 2px rgba(20,50,75,.75)"></div><div class="abs" style="left:6.799999999999997px;top:47.50px;width:325.8px;height:11.4px;border-radius:2px;background:#7fbade;box-shadow:0 1.5px 2px rgba(20,50,75,.75)"></div><div class="abs" style="left:6.799999999999997px;top:63.20px;width:325.8px;height:1px;background:#5c5c5c"></div><div class="t" style="left:6.600000000000001px;top:72.00px;font-size:13.2px;line-height:16px;color:#f2f2f2">Encryption_Classification_Policy</div><div class="abs" style="left:6.799999999999997px;top:91.35px;width:191.60000000000002px;height:11.4px;border-radius:2px;background:#3b80aa;box-shadow:0 1.5px 2px rgba(20,50,75,.75)"></div><div class="abs" style="left:6.799999999999997px;top:107.35px;width:325.8px;height:11.4px;border-radius:2px;background:#7fbade;box-shadow:0 1.5px 2px rgba(20,50,75,.75)"></div><div class="abs" style="left:6.799999999999997px;top:123.05px;width:325.8px;height:1px;background:#5c5c5c"></div><div class="t" style="left:6.600000000000001px;top:132.00px;font-size:13.2px;line-height:16px;color:#f2f2f2">GDPR</div><div class="abs" style="left:6.799999999999997px;top:151.20px;width:191.60000000000002px;height:11.4px;border-radius:2px;background:#3b80aa;box-shadow:0 1.5px 2px rgba(20,50,75,.75)"></div><div class="abs" style="left:6.799999999999997px;top:167.20px;width:325.8px;height:11.4px;border-radius:2px;background:#7fbade;box-shadow:0 1.5px 2px rgba(20,50,75,.75)"></div><div class="abs" style="left:6.799999999999997px;top:182.90px;width:325.8px;height:1px;background:#5c5c5c"></div><div class="t" style="left:6.600000000000001px;top:192.00px;font-size:13.2px;line-height:16px;color:#f2f2f2">PCI</div><div class="abs" style="left:6.799999999999997px;top:211.05px;width:191.60000000000002px;height:11.4px;border-radius:2px;background:#3b80aa;box-shadow:0 1.5px 2px rgba(20,50,75,.75)"></div><div class="abs" style="left:6.799999999999997px;top:227.05px;width:325.8px;height:11.4px;border-radius:2px;background:#7fbade;box-shadow:0 1.5px 2px rgba(20,50,75,.75)"></div><div class="abs" style="left:6.799999999999997px;top:242.75px;width:325.8px;height:1px;background:#5c5c5c"></div><div class="t" style="left:6.600000000000001px;top:251.00px;font-size:13.2px;line-height:16px;color:#f2f2f2">PHI</div><div class="abs" style="left:6.799999999999997px;top:270.90px;width:191.60000000000002px;height:11.4px;border-radius:2px;background:#3b80aa;box-shadow:0 1.5px 2px rgba(20,50,75,.75)"></div><div class="abs" style="left:6.799999999999997px;top:286.90px;width:325.8px;height:11.4px;border-radius:2px;background:#7fbade;box-shadow:0 1.5px 2px rgba(20,50,75,.75)"></div><div class="abs" style="left:6.799999999999997px;top:302.60px;width:325.8px;height:1px;background:#5c5c5c"></div></div><div class="abs" style="left:339.4px;top:42px;width:5.2000000000000455px;height:260.5px;background:#333"></div><div class="abs" style="left:339.4px;top:42px;width:5.2000000000000455px;height:71px;background:#6b6b6b"></div><div class="abs" style="left:8.5px;top:303.5px;width:336.1px;height:1.0px;background:#6a6a6a"></div><div class="t" style="left:9.20px;top:306px;font-size:10.4px;line-height:14px;font-weight:bold;color:#a9a9a9">0</div><div class="t" style="left:86.80px;top:306px;font-size:10.4px;line-height:14px;font-weight:bold;color:#a9a9a9">10</div><div class="t" style="left:166.80px;top:306px;font-size:10.4px;line-height:14px;font-weight:bold;color:#a9a9a9">20</div><div class="t" style="left:244.20px;top:306px;font-size:10.4px;line-height:14px;font-weight:bold;color:#a9a9a9">30</div><div class="abs" style="left:123.4px;top:321.4px;width:11.699999999999989px;height:11.700000000000045px;background:#3b80aa;border-radius:1.5px"></div><div class="t" style="left:139.30px;top:322px;font-size:10.4px;line-height:14px;color:#dedede">Source</div><div class="abs" style="left:182px;top:321.4px;width:11.699999999999989px;height:11.700000000000045px;background:#7fbade;border-radius:1.5px"></div><div class="t" style="left:198.30px;top:322px;font-size:10.4px;line-height:14px;color:#dedede">Target</div></div><div class="card " style="left:376px;top:493px;width:356px;height:353px"><div class="t" style="left:9.40px;top:9px;font-size:15.9px;line-height:20px;font-weight:bold;color:#e0e0e0;transform:scaleX(1.057);transform-origin:0 0">Top Data Domains</div><svg class="abs" style="left:323px;top:8px" width="24" height="22" viewBox="0 0 24 22"><path d="M13 5 C10.2 1.6 3.6 2.2 2.4 9.6" stroke="#e4e4e4" stroke-width="2.2" fill="none"/><path d="M-0.4 9 L5.2 9.4 L2.2 13 Z" fill="#e4e4e4"/><path d="M9.8 11.7 H6.9 V19.3 H18.4 L19.4 17" stroke="#c9c9c9" stroke-width="1.5" fill="none"/><rect x="10.5" y="8.7" width="10.6" height="7" stroke="#c9c9c9" stroke-width="1.5" fill="none"/></svg><div class="t" style="left:17.70px;top:50px;font-size:11.2px;line-height:15px;font-weight:bold;color:#dedede">Data Domain</div><div class="t" style="left:108.90px;top:50px;font-size:11.2px;line-height:15px;font-weight:bold;color:#dedede">Data Sto…</div><div class="t" style="left:187.40px;top:50px;font-size:11.2px;line-height:15px;font-weight:bold;color:#dedede">Fields</div><div class="t" style="left:251.40px;top:50px;font-size:11.2px;line-height:15px;font-weight:bold;color:#dedede">Impressi…</div><div class="abs" style="left:8.5px;top:70.29999999999995px;width:314.5px;height:1.0px;background:#626262"></div><div class="abs" style="left:8.5px;top:99.5px;width:314.5px;height:1.0px;background:#626262"></div><div class="t" style="left:17.90px;top:79px;font-size:10.2px;line-height:13px;font-weight:bold;color:#6b9fc4">PhoneNumber</div><div class="t" style="left:108.20px;top:79px;font-size:10.2px;line-height:13px;font-weight:bold;color:#6b9fc4">162</div><div class="t" style="left:186.80px;top:79px;font-size:10.2px;line-height:13px;font-weight:bold;color:#6b9fc4">784</div><div class="t" style="left:251.80px;top:79px;font-size:10.2px;line-height:13px;font-weight:bold;color:#6b9fc4">774.8K</div><div class="abs" style="left:8.5px;top:128.5px;width:314.5px;height:1.0px;background:#626262"></div><div class="t" style="left:17.90px;top:108px;font-size:10.2px;line-height:13px;font-weight:bold;color:#6b9fc4">FirstName</div><div class="t" style="left:108.20px;top:108px;font-size:10.2px;line-height:13px;font-weight:bold;color:#6b9fc4">169</div><div class="t" style="left:186.80px;top:108px;font-size:10.2px;line-height:13px;font-weight:bold;color:#6b9fc4">493</div><div class="t" style="left:251.80px;top:108px;font-size:10.2px;line-height:13px;font-weight:bold;color:#6b9fc4">0</div><div class="abs" style="left:8.5px;top:157.5px;width:314.5px;height:1.0px;background:#626262"></div><div class="t" style="left:17.90px;top:137px;font-size:10.2px;line-height:13px;font-weight:bold;color:#6b9fc4">LastName</div><div class="t" style="left:108.20px;top:137px;font-size:10.2px;line-height:13px;font-weight:bold;color:#6b9fc4">169</div><div class="t" style="left:186.80px;top:137px;font-size:10.2px;line-height:13px;font-weight:bold;color:#6b9fc4">451</div><div class="t" style="left:251.80px;top:137px;font-size:10.2px;line-height:13px;font-weight:bold;color:#6b9fc4">0</div><div class="abs" style="left:8.5px;top:186.5px;width:314.5px;height:1.0px;background:#626262"></div><div class="t" style="left:17.90px;top:166px;font-size:10.2px;line-height:13px;font-weight:bold;color:#6b9fc4">Email</div><div class="t" style="left:108.20px;top:166px;font-size:10.2px;line-height:13px;font-weight:bold;color:#6b9fc4">145</div><div class="t" style="left:186.80px;top:166px;font-size:10.2px;line-height:13px;font-weight:bold;color:#6b9fc4">371</div><div class="t" style="left:251.80px;top:166px;font-size:10.2px;line-height:13px;font-weight:bold;color:#6b9fc4">0</div><div class="abs" style="left:8.5px;top:216.0px;width:314.5px;height:1.0px;background:#626262"></div><div class="t" style="left:17.90px;top:195px;font-size:10.2px;line-height:13px;font-weight:bold;color:#6b9fc4">CreditCardN…</div><div class="t" style="left:108.20px;top:195px;font-size:10.2px;line-height:13px;font-weight:bold;color:#6b9fc4">92</div><div class="t" style="left:186.80px;top:195px;font-size:10.2px;line-height:13px;font-weight:bold;color:#6b9fc4">336</div><div class="t" style="left:251.80px;top:195px;font-size:10.2px;line-height:13px;font-weight:bold;color:#6b9fc4">0</div><div class="abs" style="left:8.5px;top:245.0px;width:314.5px;height:1.0px;background:#626262"></div><div class="t" style="left:17.90px;top:225px;font-size:10.2px;line-height:13px;font-weight:bold;color:#6b9fc4">SSN</div><div class="t" style="left:108.20px;top:225px;font-size:10.2px;line-height:13px;font-weight:bold;color:#6b9fc4">96</div><div class="t" style="left:186.80px;top:225px;font-size:10.2px;line-height:13px;font-weight:bold;color:#6b9fc4">335</div><div class="t" style="left:251.80px;top:225px;font-size:10.2px;line-height:13px;font-weight:bold;color:#6b9fc4">0</div><div class="abs" style="left:8.5px;top:274.0px;width:314.5px;height:1.0px;background:#626262"></div><div class="t" style="left:17.90px;top:254px;font-size:10.2px;line-height:13px;font-weight:bold;color:#6b9fc4">Address</div><div class="t" style="left:108.20px;top:254px;font-size:10.2px;line-height:13px;font-weight:bold;color:#6b9fc4">99</div><div class="t" style="left:186.80px;top:254px;font-size:10.2px;line-height:13px;font-weight:bold;color:#6b9fc4">332</div><div class="t" style="left:251.80px;top:254px;font-size:10.2px;line-height:13px;font-weight:bold;color:#6b9fc4">12.5M</div><div class="t" style="left:17.90px;top:283px;font-size:10.2px;line-height:13px;font-weight:bold;color:#6b9fc4">City</div><div class="t" style="left:108.20px;top:283px;font-size:10.2px;line-height:13px;font-weight:bold;color:#6b9fc4">120</div><div class="t" style="left:186.80px;top:283px;font-size:10.2px;line-height:13px;font-weight:bold;color:#6b9fc4">311</div><div class="t" style="left:251.80px;top:283px;font-size:10.2px;line-height:13px;font-weight:bold;color:#6b9fc4">92.8K</div><div class="abs" style="left:337.29999999999995px;top:71.5px;width:5.7000000000000455px;height:227.0px;background:#333"></div><div class="abs" style="left:337.29999999999995px;top:71.5px;width:5.7000000000000455px;height:177.0px;background:#6b6b6b"></div><div class="abs" style="left:0px;top:310.29999999999995px;width:354px;height:41.700000000000045px;background:#6a6a6a"></div><div class="abs" style="left:104.39999999999998px;top:310.29999999999995px;width:61.80000000000007px;height:41.700000000000045px;background:#818181"></div><div class="abs" style="left:47.60000000000002px;top:310.29999999999995px;width:1.0px;height:41.700000000000045px;background:#8f8f8f"></div><div class="abs" style="left:104px;top:310.29999999999995px;width:1px;height:41.700000000000045px;background:#8f8f8f"></div><div class="abs" style="left:166px;top:310.29999999999995px;width:1px;height:41.700000000000045px;background:#8f8f8f"></div><div class="t" style="left:0.00px;top:321px;font-size:11.4px;line-height:15px;width:48px;text-align:center;color:#dcdcdc">Day</div><div class="t" style="left:48.50px;top:321px;font-size:11.4px;line-height:15px;width:56px;text-align:center;color:#dcdcdc">Week</div><div class="t" style="left:105.00px;top:321px;font-size:11.4px;line-height:15px;width:61px;text-align:center;color:#fff">Month</div></div><div class="card " style="left:751px;top:493px;width:356px;height:353px"><div class="t" style="left:9.00px;top:9px;font-size:15.9px;line-height:20px;font-weight:bold;color:#e0e0e0;transform:scaleX(1.057);transform-origin:0 0">User Access</div><svg class="abs" style="left:72px;top:46px" width="210" height="210" viewBox="870 570 210 210"><circle cx="975.2" cy="675.9" r="85.2" fill="none" stroke="#e11a21" stroke-width="19.599999999999994"/><path d="M975.2 590.6999999999999 A85.2 85.2 0 0 1 1049.72 634.59" fill="none" stroke="#4f8e22" stroke-width="19.599999999999994"/></svg><div class="t" style="left:147.00px;top:179px;font-size:18px;line-height:23px;width:60px;text-align:center;font-weight:bold;color:#fff">537</div><div class="t" style="left:147.00px;top:200px;font-size:10.5px;line-height:14px;width:60px;text-align:center;color:#f0f0f0">Users</div><div class="abs" style="left:9.399999999999977px;top:277px;width:335.0000000000001px;height:42.799999999999955px;background:#000;border:1px solid #7a7a7a;border-radius:3px"></div><div class="abs" style="left:176.70000000000005px;top:277px;width:1.0px;height:42.799999999999955px;background:#7a7a7a"></div><div class="t" style="left:9.40px;top:283px;font-size:14.7px;line-height:19px;width:167.8px;text-align:center;font-weight:bold;color:#e2323a">9.6K</div><div class="t" style="left:9.40px;top:299px;font-size:11.2px;line-height:15px;width:167.8px;text-align:center;color:#f4f4f4">Unprotected Fields/Files</div><div class="t" style="left:177.20px;top:283px;font-size:14.7px;line-height:19px;width:167.2px;text-align:center;font-weight:bold;color:#5da32e">2K</div><div class="t" style="left:177.20px;top:299px;font-size:11.2px;line-height:15px;width:167.2px;text-align:center;color:#f4f4f4">Protected Fields/Files</div></div></div></body></html>
